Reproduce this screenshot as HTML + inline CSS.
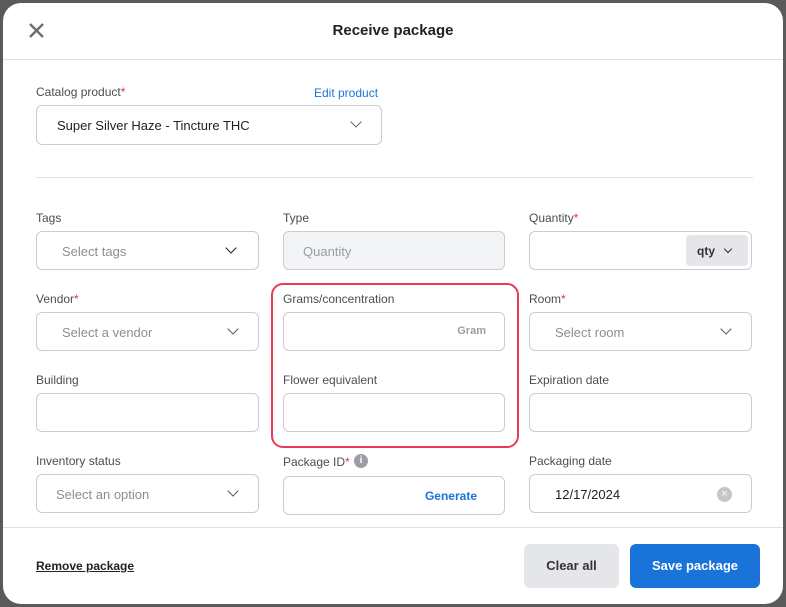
<!DOCTYPE html>
<html><head><style>
*{box-sizing:border-box;margin:0;padding:0}
body{width:786px;height:607px;background:#5a5a5a;font-family:"Liberation Sans",sans-serif;position:relative;overflow:hidden}
.m{position:absolute;left:3px;top:3px;width:780px;height:601px;background:#fff;border-radius:18px;overflow:hidden}
.a{position:absolute}
.lbl{position:absolute;font-size:12px;color:#4a4d52}
.req{color:#e5323e}
.in{position:absolute;height:39px;border:1px solid #c9ccd0;border-radius:6px;background:#fff;font-size:13px;color:#8a8e94}
.in span{position:absolute;left:25px;top:12px}
.chev{position:absolute;top:14px;width:8px;height:8px;border-right:1.6px solid #555;border-bottom:1.6px solid #555;transform:rotate(45deg)}
.hr{position:absolute;left:0;right:0;height:1px;background:#dfe1e4}
</style></head><body>
<div class="m">
<div class="a" style="left:25px;top:19px"><svg width="17" height="17"><path d="M2 2L15 15M15 2L2 15" stroke="#6b6f75" stroke-width="2.4"/></svg></div>
<div class="a" style="left:0;width:780px;top:19px;text-align:center;font-size:15px;font-weight:bold;color:#222">Receive package</div>
<div class="hr" style="top:56px"></div>
<div class="lbl" style="left:33px;top:82px">Catalog product<span class="req">*</span></div>
<div class="a" style="left:311px;top:83px;font-size:12px;color:#1a73d9">Edit product</div>
<div class="in" style="left:33px;top:102px;width:346px;height:40px;color:#222"><span style="left:20px">Super Silver Haze - Tincture THC</span><div class="chev" style="right:21px;top:12px;border-color:#666"></div></div>
<div class="hr" style="top:174px;left:33px;right:30px"></div>

<div class="lbl" style="left:33px;top:208px">Tags</div>
<div class="in" style="left:33px;top:228px;width:223px"><span>Select tags</span><div class="chev" style="right:23px;top:12px;border-color:#222"></div></div>
<div class="lbl" style="left:280px;top:208px">Type</div>
<div class="in" style="left:280px;top:228px;width:222px;background:#f3f4f6;color:#9a9ea4"><span style="left:19px">Quantity</span></div>
<div class="lbl" style="left:526px;top:208px">Quantity<span class="req">*</span></div>
<div class="in" style="left:526px;top:228px;width:223px"><div class="a" style="right:3px;top:3px;width:62px;height:31px;background:#e4e6e9;border-radius:4px;font-size:12px;font-weight:bold;color:#333"><span style="left:11px;top:9px">qty</span><div class="chev" style="right:17px;top:11px;width:6px;height:6px;border-color:#333"></div></div></div>

<div class="lbl" style="left:33px;top:289px">Vendor<span class="req">*</span></div>
<div class="in" style="left:33px;top:309px;width:223px"><span>Select a vendor</span><div class="chev" style="right:21px;top:12px"></div></div>
<div class="a" style="left:268px;top:280px;width:248px;height:165px;border:2px solid #ea3b55;border-radius:12px"></div>
<div class="lbl" style="left:280px;top:289px">Grams/concentration</div>
<div class="in" style="left:280px;top:309px;width:222px"><span style="left:auto;right:18px;font-size:11px;font-weight:bold;color:#9a9ea4">Gram</span></div>
<div class="lbl" style="left:526px;top:289px">Room<span class="req">*</span></div>
<div class="in" style="left:526px;top:309px;width:223px"><span>Select room</span><div class="chev" style="right:21px;top:12px"></div></div>

<div class="lbl" style="left:33px;top:370px">Building</div>
<div class="in" style="left:33px;top:390px;width:223px"></div>
<div class="lbl" style="left:280px;top:370px">Flower equivalent</div>
<div class="in" style="left:280px;top:390px;width:222px"></div>
<div class="lbl" style="left:526px;top:370px">Expiration date</div>
<div class="in" style="left:526px;top:390px;width:223px"></div>

<div class="lbl" style="left:33px;top:451px">Inventory status</div>
<div class="in" style="left:33px;top:471px;width:223px"><span style="left:19px">Select an option</span><div class="chev" style="right:21px;top:12px"></div></div>
<div class="lbl" style="left:280px;top:452px">Package ID<span class="req">*</span></div>
<div class="a" style="left:351px;top:451px;width:14px;height:14px;border-radius:50%;background:#9a9ea4;color:#fff;font-size:10px;font-weight:bold;text-align:center;line-height:14px">i</div>
<div class="in" style="left:280px;top:473px;width:222px"><span style="left:auto;right:27px;color:#1a73d9;font-weight:bold;font-size:12px">Generate</span></div>
<div class="lbl" style="left:526px;top:451px">Packaging date</div>
<div class="in" style="left:526px;top:471px;width:223px;color:#222"><span>12/17/2024</span><div class="a" style="right:19px;top:12px;width:15px;height:15px;border-radius:50%;background:#c3c6ca;color:#fff;font-size:11px;text-align:center;line-height:15px">×</div></div>

<div class="hr" style="top:524px"></div>
<div class="a" style="left:33px;top:556px;font-size:12px;font-weight:bold;color:#222;text-decoration:underline">Remove package</div>
<div class="a" style="left:521px;top:541px;width:95px;height:44px;background:#e4e6e9;border-radius:6px;font-size:13px;font-weight:bold;color:#333;text-align:center;line-height:44px">Clear all</div>
<div class="a" style="left:627px;top:541px;width:130px;height:44px;background:#1a73d9;border-radius:6px;font-size:13px;font-weight:bold;color:#fff;text-align:center;line-height:44px">Save package</div>
</div>
</body></html>
